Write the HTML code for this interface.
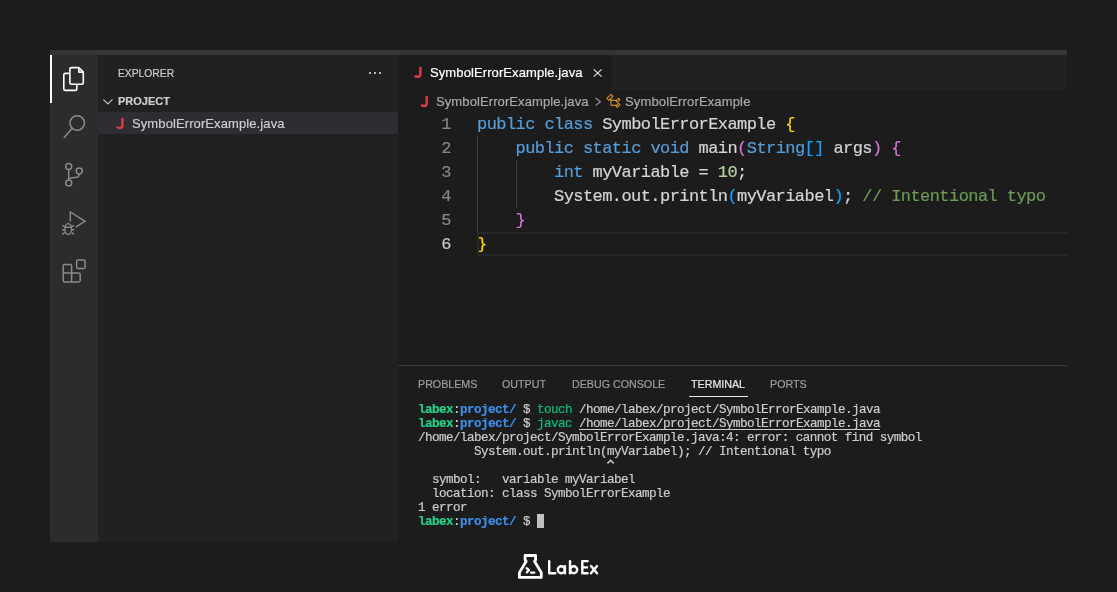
<!DOCTYPE html>
<html><head><meta charset="utf-8">
<style>
*{margin:0;padding:0;box-sizing:border-box}
html,body{width:1117px;height:592px;overflow:hidden;background:#1c1c1c}
body{position:relative;font-family:"Liberation Sans",sans-serif}
.a{position:absolute}
.ui{font-family:"Liberation Sans",sans-serif;white-space:pre;will-change:transform;-webkit-text-stroke:0.2px currentColor}
.mono{font-family:"Liberation Mono",monospace;white-space:pre;will-change:transform;-webkit-text-stroke:0.2px currentColor}
#topstrip{left:50px;top:50px;width:1017px;height:5px;background:#353535}
#act{left:50px;top:55px;width:48px;height:487px;background:#2c2c2c}
#actind{left:50px;top:55px;width:2px;height:48px;background:#fff}
#side{left:98px;top:55px;width:300px;height:487px;background:#212121}
#editor{left:398px;top:55px;width:669px;height:487px;background:#1c1c1c}
#tabbar{left:398px;top:55px;width:669px;height:35px;background:#212121}
#tab{left:398px;top:55px;width:214px;height:35px;background:#1c1c1c}
.code{font-size:17px;line-height:24px;letter-spacing:-0.57px}
.ln{color:#858585;text-align:right;width:60px}
.kw{color:#569cd6}
.id{color:#d4d4d4}
.g{color:#ffd700}
.m{color:#da70d6}
.b{color:#179fff}
.n{color:#b5cea8}
.c{color:#6a9955}
.term{font-size:12.6px;line-height:14px;color:#cccccc;letter-spacing:-0.56px}
.tg{color:#23d18b;font-weight:bold}
.tb{color:#3b8eea;font-weight:bold}
.tc{color:#0dbc79}
</style></head>
<body>
<div class="a" id="topstrip"></div>
<div class="a" id="act"></div>
<div class="a" id="actind"></div>
<div class="a" id="side"></div>
<div class="a" id="editor"></div>
<div class="a" id="tabbar"></div>
<div class="a" id="tab"></div>

<!-- sidebar -->
<div class="a ui" style="left:118px;top:67px;font-size:10.3px;line-height:14px;color:#cccccc">EXPLORER</div>
<div class="a ui" style="left:118px;top:94px;font-size:11px;line-height:14px;color:#cccccc;font-weight:bold">PROJECT</div>
<div class="a" style="left:98px;top:112px;width:300px;height:22px;background:#2d2d33"></div>
<div class="a ui" style="left:132px;top:116px;font-size:13px;line-height:16px;letter-spacing:0.1px;color:#cccccc">SymbolErrorExample.java</div>

<!-- tab -->
<div class="a ui" style="left:430px;top:65px;font-size:13px;line-height:16px;letter-spacing:0.1px;color:#ffffff">SymbolErrorExample.java</div>
<!-- breadcrumbs -->
<div class="a ui" style="left:436px;top:94px;font-size:13px;line-height:16px;letter-spacing:0.1px;color:#a9a9a9">SymbolErrorExample.java</div>
<div class="a ui" style="left:625px;top:94px;font-size:13px;line-height:16px;letter-spacing:0.15px;color:#a9a9a9">SymbolErrorExample</div>

<!-- code -->
<div class="a mono code ln" style="left:391px;top:113px">1
2
3
4
5
<span style="color:#c6c6c6">6</span></div>
<div class="a mono code id" style="left:477px;top:113px"><span class="kw">public</span> <span class="kw">class</span> SymbolErrorExample <span class="g">{</span>
    <span class="kw">public</span> <span class="kw">static</span> <span class="kw">void</span> main<span class="m">(</span><span class="kw">String</span><span class="b">[]</span> args<span class="m">)</span> <span class="m">{</span>
        <span class="kw">int</span> myVariable = <span class="n">10</span>;
        System.out.println<span class="b">(</span>myVariabel<span class="b">)</span>; <span class="c">// Intentional typo</span>
    <span class="m">}</span>
<span class="g">}</span></div>

<!-- panel -->
<div class="a" style="left:398px;top:365px;width:669px;height:1px;background:#3a3a3a"></div>
<div class="a ui" style="left:418px;top:377px;font-size:10.7px;line-height:14px;color:#9d9d9d">PROBLEMS</div>
<div class="a ui" style="left:502px;top:377px;font-size:10.7px;line-height:14px;color:#9d9d9d">OUTPUT</div>
<div class="a ui" style="left:572px;top:377px;font-size:10.7px;line-height:14px;color:#9d9d9d">DEBUG CONSOLE</div>
<div class="a ui" style="left:691px;top:377px;font-size:10.7px;line-height:14px;color:#e7e7e7">TERMINAL</div>
<div class="a" style="left:689px;top:396px;width:59px;height:1px;background:#e7e7e7"></div>
<div class="a ui" style="left:770px;top:377px;font-size:10.7px;line-height:14px;color:#9d9d9d">PORTS</div>

<div class="a mono term" style="left:418px;top:403px"><span class="tg">labex</span>:<span class="tb">project/</span> $ <span class="tc">touch</span> /home/labex/project/SymbolErrorExample.java
<span class="tg">labex</span>:<span class="tb">project/</span> $ <span class="tc">javac</span> /home/labex/project/SymbolErrorExample.java
/home/labex/project/SymbolErrorExample.java:4: error: cannot find symbol
        System.out.println(myVariabel); // Intentional typo
                            
  symbol:   variable myVariabel
  location: class SymbolErrorExample
1 error
<span class="tg">labex</span>:<span class="tb">project/</span> $ </div>
<div class="a" style="left:579px;top:429px;width:301px;height:1px;background:#cccccc"></div>
<div class="a" style="left:537px;top:514px;width:7px;height:14px;background:#c0c0c0"></div>


<svg class="a" style="left:0;top:0" width="1117" height="592" viewBox="0 0 1117 592" fill="none">
<!-- explorer icon -->
<g stroke="#ffffff" stroke-width="1.6" stroke-linejoin="round">
<path d="M71.4,67.6 H78.8 L83.3,72.1 V82.8 Q83.3,84.3 81.8,84.3 H71.4 Q69.9,84.3 69.9,82.8 V69.1 Q69.9,67.6 71.4,67.6 Z"/>
<path d="M78.8,67.6 V72.1 H83.3" />
<path d="M69.9,73.4 H65.3 Q63.8,73.4 63.8,74.9 V88.9 Q63.8,90.4 65.3,90.4 H75.3 Q76.8,90.4 76.8,88.9 V84.3"/>
</g>

<!-- search -->
<g stroke="#8a8a8a" stroke-width="1.55">
<circle cx="77.2" cy="123" r="7.25"/>
<path d="M72.1,128.3 L64.2,137.4" stroke-linecap="round"/>
</g>
<!-- source control -->
<g stroke="#8a8a8a" stroke-width="1.5">
<circle cx="68.7" cy="166.6" r="3"/>
<circle cx="79.2" cy="171" r="3"/>
<circle cx="68.7" cy="183.1" r="3"/>
<path d="M68.7,169.6 V180.1"/>
<path d="M79.2,174 C79.2,176.6 77.4,177.6 74.5,177.6 C71.2,177.6 68.7,178.2 68.7,180.5"/>
</g>
<!-- debug -->
<g stroke="#8a8a8a" stroke-width="1.4">
<path d="M70.3,221.6 V212 L85,221.3 L75.6,227.2" stroke-linejoin="miter"/>
<ellipse cx="68.2" cy="229" rx="3.4" ry="5.4"/>
<path d="M64.9,227.3 H71.5"/>
<path d="M62,229.7 H64.6 M71.8,229.7 H74.4 M62.3,225.3 L64.8,227 M74.1,225.3 L71.6,227 M62.3,234.4 L64.8,232.5 M74.1,234.4 L71.6,232.5"/>
</g>
<!-- extensions -->
<g stroke="#8a8a8a" stroke-width="1.5" stroke-linejoin="round">
<path d="M64.4,264.4 H70.2 Q71.6,264.4 71.6,265.8 V273.1 H78.8 Q80.2,273.1 80.2,274.5 V280.6 Q80.2,282 78.8,282 H64.4 Q63.2,282 63.2,280.6 V265.8 Q63.2,264.4 64.4,264.4 Z"/>
<path d="M63.2,273.1 H71.6 V282"/>
<rect x="76.6" y="260" width="8.5" height="8.6" rx="1.4"/>
</g>
<!-- chevron project -->
<path d="M103.3,99.4 L107.9,104 L112.5,99.4" stroke="#c5c5c5" stroke-width="1.1"/>
<!-- dots -->
<g fill="#b8b8b8"><rect x="369" y="72" width="2" height="2"/><rect x="374" y="72" width="2" height="2"/><rect x="379" y="72" width="2" height="2"/></g>
<!-- J icons -->
<g stroke="#d43b47" stroke-width="2.5" stroke-linecap="butt">
<path d="M420.4,66.8 V74.3 Q420.4,76.8 417.8,76.8 Q415.8,76.8 415,75.5"/>
<path d="M122.4,118 V125.5 Q122.4,128 119.8,128 Q117.8,128 117,126.7"/>
<path d="M426.7,95.9 V103.4 Q426.7,105.9 424.1,105.9 Q422.1,105.9 421.3,104.6"/>
</g>
<!-- tab close -->
<path d="M593.8,69.4 L601.6,76.6 M601.6,69.4 L593.8,76.6" stroke="#e0e0e0" stroke-width="1.2"/>
<!-- breadcrumb chevron -->
<path d="M595.6,98 L600.4,101.8 L595.6,105.6" stroke="#9a9a9a" stroke-width="1.1"/>
<!-- symbol class -->
<path transform="translate(605.6,93)" fill="#ee9d28" d="M11.34 9.71h.71l2.67-2.67v-.71L13.38 5h-.7l-1.82 1.81h-5V5.56l1.86-1.85V3l-2-2H5L1 5v.71l2 2h.71l1.14-1.15v5.79l.5.5H10v.52l1.33 1.34h.71l2.67-2.67v-.71L13.37 10h-.7l-1.86 1.85h-5v-4H10v.48l1.34 1.38zm1.69-3.65l.63.63-2 2-.63-.63 2-2zm0 5l.63.63-2 2-.63-.63 2-2zM3.35 6.65l-1.29-1.3 3.29-3.29 1.3 1.29-3.3 3.3z"/>
<path d="M607.5,463.4 L610.6,460.3 L613.7,463.4" stroke="#cccccc" stroke-width="1.5" fill="none"/>
<!-- indent guides -->
<rect x="477" y="136" width="1" height="96" fill="#404040"/>
<rect x="516" y="160" width="1" height="48" fill="#404040"/>
<!-- current line -->
<path d="M1067,233 H478 V255 H1067" stroke="#282828" stroke-width="2" fill="none"/>
<!-- logo -->
<g stroke="#ffffff" stroke-width="2.8" fill="none" stroke-linejoin="round">
<path d="M525.1,555.5 H535.6 V559.9 L534.5,561.3 L541.3,572.6 V577.4 H519.4 V572.6 L526.2,561.3 L525.1,559.9 Z"/>
<path d="M526.6,568.2 L529,570.2 L526.8,572.3" stroke-width="2.3" stroke-linecap="round"/>
<path d="M531.1,572.7 H534.3" stroke-width="2.2" stroke-linecap="round"/>
</g>
<g stroke="#ffffff" stroke-width="2.4" fill="none" stroke-linecap="round" stroke-linejoin="round">
<path d="M549.2,561.1 V573.2 H555.3"/>
<circle cx="561.3" cy="569.7" r="3.5"/>
<path d="M564.9,566.1 V573.3"/>
<path d="M570,561.1 V573.3"/>
<circle cx="573.7" cy="569.7" r="3.5"/>
<path d="M587.6,561.1 H582.3 V573.2 H587.6 M582.3,567.4 H587"/>
<path d="M591,566.1 L597,573.3 M597,566.1 L591,573.3"/>
</g>
</svg>

</body></html>
